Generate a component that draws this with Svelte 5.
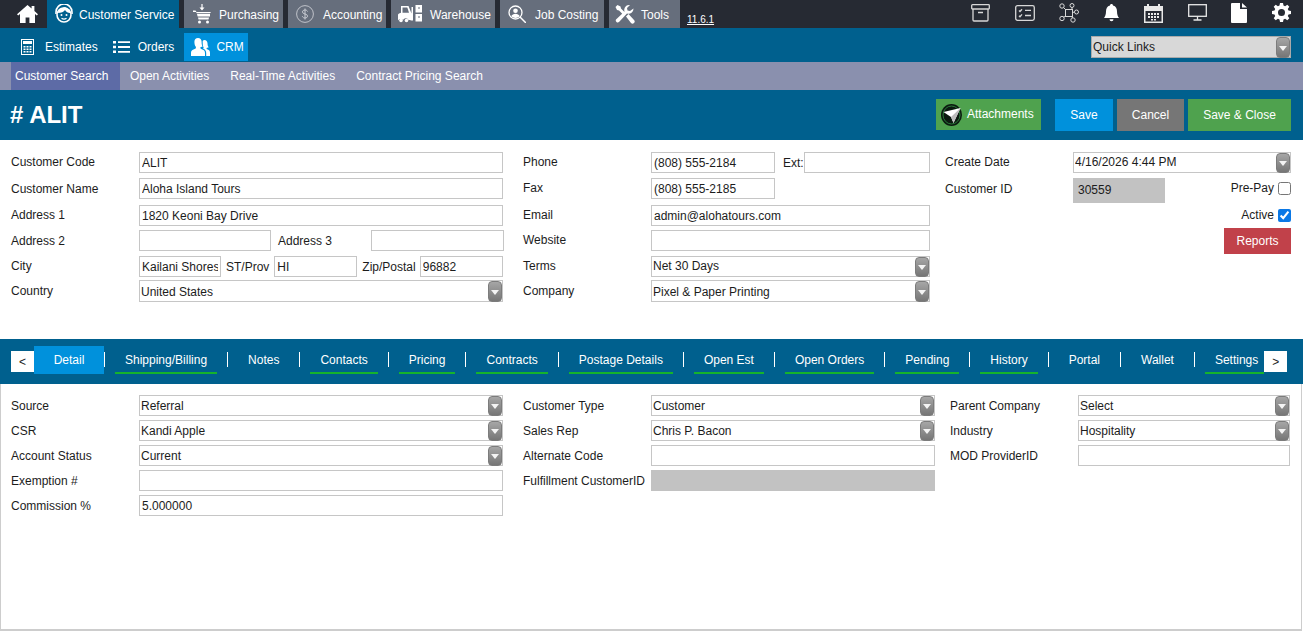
<script>
  const modules = [
    { id: "purchasing", label: "Purchasing" },
    { id: "accounting", label: "Accounting" },
    { id: "warehouse", label: "Warehouse" },
    { id: "costing", label: "Job Costing" },
    { id: "tools", label: "Tools" },
  ];
  const subLinks = ["Open Activities", "Real-Time Activities", "Contract Pricing Search"];
  const tabs = [
    { label: "Shipping/Billing", mark: true },
    { label: "Notes" },
    { label: "Contacts", mark: true },
    { label: "Pricing", mark: true },
    { label: "Contracts", mark: true },
    { label: "Postage Details", mark: true },
    { label: "Open Est", mark: true },
    { label: "Open Orders", mark: true },
    { label: "Pending", mark: true },
    { label: "History", mark: true },
    { label: "Portal" },
    { label: "Wallet" },
  ];
</script>

{#snippet pick(value, cls = "")}
  <div class="pick {cls}">
    <select><option>{value}</option></select>
    <span class="arrow"></span>
  </div>
{/snippet}

<div class="page">
  <nav class="topbar">
    <a class="home" href="#home" aria-label="Home">
      <svg width="21" height="18" viewBox="0 0 21 18"><path fill="#fff" d="M10.5 0 0 9.2l1.2 1.3L3 9v9h5.6v-5.6h3.8V18H18V9l1.8 1.5L21 9.2l-3.6-3.1V1h-2.8v2.6z"/></svg>
    </a>
    <a class="mod active" href="#cs">
      <svg width="20" height="20" viewBox="0 0 20 20" fill="none" stroke="#fff"><path stroke-width="1.6" d="M2 10V8a8 8 0 0 1 16 0v2"/><circle cx="10" cy="11" r="7" stroke-width="1.6"/><path fill="#fff" stroke="none" d="M4 9c3 0 6-1 7-3 1 2 3 3 5 3V6l-5-3-6 2z"/><circle cx="7.5" cy="11" r="1" fill="#fff" stroke="none"/><circle cx="12.5" cy="11" r="1" fill="#fff" stroke="none"/><path stroke-width="1.2" d="M7.5 14.2c1.5 1 3.5 1 5 0"/></svg>
      Customer Service
    </a>
    {#each modules as m}
      <a class="mod {m.id}" href="#{m.id}">
        {#if m.id === "purchasing"}
          <svg width="18" height="20" viewBox="0 0 18 20" fill="#fff"><path d="M8.400 0h1.200v3.500h1.900L9 6.500l-2.500-3h1.900zM0 6.500h2.500l1 1.500H18l-1 1.200H3.800L3 8H0zM4 10h13v2.500H4.600zM5 13.500h11l-.5 2H5.500z"/><circle cx="6.500" cy="18" r="1.500"/><circle cx="14.500" cy="18" r="1.500"/></svg>
        {:else if m.id === "accounting"}
          <svg width="18" height="18" viewBox="0 0 18 18" fill="none" stroke="#c9ccd3" stroke-width=".9"><circle cx="9" cy="9" r="8.400"/><path stroke-width="1" d="M11.500 6.500C11 5.300 10.200 5 9 5 7.500 5 6.500 5.700 6.500 7c0 2.700 5 1.300 5 4 0 1.300-1 2-2.500 2-1.300 0-2.200-.5-2.700-1.700M9 3.500v11"/></svg>
        {:else if m.id === "warehouse"}
          <svg width="24" height="18" viewBox="0 0 24 18" fill="#fff"><path fill-rule="evenodd" d="M1 8.500 3 7.800V1h7.500l3 7.500V2h1.500v13.500h-2.500V15h-2a3 3 0 0 0-5.500 0 3 3 0 0 0-5 .5V9.500zM4.500 2.500v5.300H11L9.300 2.500z"/><circle cx="3" cy="15.500" r="1.800"/><circle cx="8.500" cy="15.500" r="1.800"/><path d="M17.500 0H24v7.500h-6.500zM17.500 9H24v7.500h-6.500z"/><path fill="#666e7c" d="M20 2.500h2v1h-2zM20 11.500h2v1h-2z"/></svg>
        {:else if m.id === "costing"}
          <svg width="18" height="18" viewBox="0 0 18 18" fill="none" stroke="#fff"><circle cx="7.500" cy="7.500" r="6.500" stroke-width="1.300"/><path stroke-width="1.500" stroke-linecap="round" d="m12.500 12.500 5 5"/><circle cx="7.500" cy="5.800" r="2.300" fill="#fff" stroke="none"/><path fill="#fff" stroke="none" d="M3.200 11.300C4 9.500 5.600 8.700 7.500 8.700s3.500.8 4.300 2.600a6 6 0 0 1-8.600 0z"/></svg>
        {:else}
          <svg width="21" height="20" viewBox="0 0 20 20" fill="#fff"><path d="m1 3 2-2 3 1.500.5 2L11 9l-2 2-4.500-4.500-2-.5zM19 4.500a5 5 0 0 1-6.500 5L4.500 18a2 2 0 0 1-3-2.500l8.500-8a5 5 0 0 1 5.500-6.500l-3 3 .5 2.500 2.500.5z"/><path d="m11.500 12.500 2.500-2.500 5.500 6a2 2 0 0 1-3 3z"/></svg>
        {/if}
        {m.label}
      </a>
    {/each}
    <span class="version">11.6.1</span>
    <div class="tray">
      <svg width="19" height="18" viewBox="0 0 19 18" fill="none" stroke="#d8d8d8" stroke-width="1.300"><rect x=".7" y=".7" width="17.6" height="4.3" rx=".8"/><path d="M2 5v11a1 1 0 0 0 1 1h13a1 1 0 0 0 1-1V5M7 8.500h5"/></svg>
      <svg width="20" height="16" viewBox="0 0 20 16" fill="none" stroke="#d8d8d8" stroke-width="1.300"><rect x=".7" y=".7" width="18.6" height="14.6" rx="1.8"/><path d="M10 5.300h6M10 10.500h6M4 5.500l1 1 2-2.300M4 10.700l1 1 2-2.300"/></svg>
      <svg width="20" height="20" viewBox="0 0 20 20" fill="none" stroke="#d8d8d8"><rect x="6.500" y="6.500" width="7" height="7"/><circle cx="3" cy="3" r="2.200"/><circle cx="13" cy="2.500" r="2"/><circle cx="17.500" cy="9" r="2"/><circle cx="14" cy="17" r="2.200"/><circle cx="3" cy="15.500" r="2.200"/><path d="m4.500 4.500 2 2M13 4.500v2M13.500 9.500l2-.5M13 13.500l.5 1.500M6.500 13.500l-2 .5"/></svg>
      <svg width="15" height="18" viewBox="0 0 15 18" fill="#fff"><path d="M7.500 0C8.300 0 9 .6 9 1.400 12 2.200 13 4.500 13 7.500c0 3 .8 5 2 6.500H0c1.200-1.500 2-3.500 2-6.500C2 4.500 3 2.200 6 1.400 6 .6 6.700 0 7.500 0z"/><path d="M5.500 15.300h4a2 2 0 0 1-4 0z"/></svg>
      <svg width="19" height="20" viewBox="0 0 19 20"><path fill="#e8e8e8" d="M0 3h3V1h2v2h9V1h2v2h3v17H0zm1.500 5v10.500h16V8z"/><path fill="#e8e8e8" d="M4 10h2v2H4zM7 10h2v2H7zM10 10h2v2h-2zM13 10h2v2h-2zM4 13h2v2H4zM7 13h2v2H7zM10 13h2v2h-2zM13 13h2v2h-2zM7 16h2v1.500H7zM10 16h2v1.500h-2z"/></svg>
      <svg width="19" height="17" viewBox="0 0 19 17" fill="none" stroke="#e8e8e8" stroke-width="1.300"><rect x=".7" y=".7" width="17.6" height="11.600"/><path d="M9.500 12.500v3M5.500 16h8"/></svg>
      <svg width="16" height="20" viewBox="0 0 16 20" fill="#fff"><path d="M0 1a1 1 0 0 1 1-1h8v6h7v13a1 1 0 0 1-1 1H1a1 1 0 0 1-1-1zM11 0l5 4.500h-5z"/></svg>
      <svg width="19" height="19" viewBox="0 0 19 19" fill="#fff"><path fill-rule="evenodd" d="M8 0h3l.5 2.600 1.600.7L15.300 1.800l2 2-1.500 2.200.7 1.600 2.500.5v2.900l-2.500.5-.7 1.600 1.500 2.200-2 2-2.200-1.500-1.600.7L11 19H8l-.5-2.500-1.600-.7-2.200 1.500-2-2 1.500-2.200-.7-1.600L0 10.900V8l2.500-.5.7-1.600L1.700 3.800l2-2 2.200 1.500 1.600-.7zm1.500 6a3.500 3.500 0 1 0 0 7 3.500 3.500 0 0 0 0-7z"/></svg>
    </div>
  </nav>

  <nav class="secondbar">
    <a href="#estimates">
      <svg width="13" height="16" viewBox="0 0 13 16"><path fill="#fff" fill-rule="evenodd" d="M0 0h13v16H0zm1 1v14h11V1zm1 1h9v3H2zM2.500 7h2v1.500h-2zm3 0h2v1.500h-2zm3 0h2v1.500h-2zm-6 2.500h2V11h-2zm3 0h2V11h-2zm3 0h2V11h-2zm-6 2.500h2v1.500h-2zm3 0h2v1.500h-2zm3 0h2v1.500h-2z"/></svg>
      Estimates
    </a>
    <a href="#orders">
      <svg width="17" height="12" viewBox="0 0 17 12" fill="#fff"><path d="M0 0h3v2.400H0zM5 .3h12v1.800H5zM0 4.800h3v2.400H0zM5 5.100h12v1.800H5zM0 9.600h3V12H0zM5 9.900h12v1.800H5z"/></svg>
      Orders
    </a>
    <a class="active" href="#crm">
      <svg width="19" height="18" viewBox="0 0 19 18" fill="#fff"><path d="M7 0c2.200 0 3.600 1.600 3.600 3.800 0 2 .2 3.400 1 4.600l-2.300.8.400 1.500L12.500 12c.8.500 1.500 1.300 1.500 3.300V18H0v-3c0-1.800.7-2.600 2-3.200l2.700-1.300.3-1.500C3.800 8 3.400 5.800 3.400 3.800 3.400 1.600 4.800 0 7 0z"/><path d="M13.500 2c1.700 0 3 1.400 3 3.300 0 1.500.3 3 1.300 4l-2.300.8.200 1 2 1c.9.500 1.300 1.300 1.300 3V18h-3.800v-2.700c0-2-.8-3.300-2.200-4.200l-1-.6.700-.7c-.8-1.500-1-3.200-1-5 0-.8-.1-1.400 0-1.900.4-.5 1-.9 1.800-.9z"/></svg>
      CRM
    </a>
    <div class="quick">{@render pick("Quick Links")}</div>
  </nav>

  <nav class="thirdbar">
    <a class="active" href="#search">Customer Search</a>
    {#each subLinks as link}
      <a href="#link">{link}</a>
    {/each}
  </nav>

  <header class="title">
    <h1># ALIT</h1>
    <button class="btn attach">
      <svg width="21" height="22" viewBox="0 0 21 22"><ellipse cx="10.5" cy="11" rx="10.5" ry="11" fill="#0c1a10"/><ellipse cx="10.5" cy="11" rx="8.5" ry="9" fill="none" stroke="#2a7a3a"/><path fill="#fff" d="M2.500 8 19.500 4 12.500 19l-2.500-6z"/><path fill="#bdbdbd" d="m10 13 9.500-9-7 15z"/></svg>
      Attachments
    </button>
    <button class="btn save">Save</button>
    <button class="btn cancel">Cancel</button>
    <button class="btn close">Save &amp; Close</button>
  </header>

  <section class="upper">
    <div class="col left">
      <label for="code">Customer Code</label><input id="code" value="ALIT" />
      <label for="name">Customer Name</label><input id="name" value="Aloha Island Tours" />
      <label for="a1">Address 1</label><input id="a1" value="1820 Keoni Bay Drive" />
      <label for="a2">Address 2</label>
      <div class="pair">
        <input id="a2" class="a2" />
        <label for="a3">Address 3</label>
        <input id="a3" class="a3" />
      </div>
      <label for="city">City</label>
      <div class="pair">
        <input id="city" class="city" value="Kailani Shores" />
        <label for="st">ST/Prov</label>
        <input id="st" class="st" value="HI" />
        <label for="zip">Zip/Postal</label>
        <input id="zip" class="zip" value="96882" />
      </div>
      <span class="lab tall">Country</span>{@render pick("United States", "tall")}
    </div>

    <div class="col mid">
      <label for="phone">Phone</label>
      <div class="pair">
        <input id="phone" class="phone" value="(808) 555-2184" />
        <label for="ext">Ext:</label>
        <input id="ext" class="ext" />
      </div>
      <label for="fax">Fax</label><input id="fax" class="phone" value="(808) 555-2185" />
      <label for="email">Email</label><input id="email" value="admin@alohatours.com" />
      <label for="web">Website</label><input id="web" />
      <span class="lab">Terms</span>{@render pick("Net 30 Days")}
      <span class="lab tall">Company</span>{@render pick("Pixel & Paper Printing", "tall")}
    </div>

    <div class="col right">
      <span class="lab">Create Date</span>{@render pick("4/16/2026 4:44 PM")}
      <span class="lab tall">Customer ID</span>
      <div class="pair idrow">
        <span class="readonly id">30559</span>
        <label class="check">Pre-Pay <input type="checkbox" /></label>
      </div>
      <div class="flags">
        <label class="check">Active <input type="checkbox" checked /></label>
        <button class="btn reports">Reports</button>
      </div>
    </div>
  </section>

  <nav class="tabs">
    <button class="step">&lt;</button>
    <a class="tab current" href="#detail">Detail</a>
    <i class="sep first"></i>
    {#each tabs as t}
      <a class="tab" class:mark={t.mark} href="#tab">{t.label}</a>
      <i class="sep"></i>
    {/each}
    <a class="tab mark last" href="#settings">Settings</a>
    <button class="step">&gt;</button>
  </nav>

  <section class="lower">
    <div class="col left">
      <span class="lab">Source</span>{@render pick("Referral")}
      <span class="lab">CSR</span>{@render pick("Kandi Apple")}
      <span class="lab">Account Status</span>{@render pick("Current")}
      <label for="ex">Exemption #</label><input id="ex" />
      <label for="com">Commission %</label><input id="com" value="5.000000" />
    </div>
    <div class="col mid">
      <span class="lab">Customer Type</span>{@render pick("Customer")}
      <span class="lab">Sales Rep</span>{@render pick("Chris P. Bacon")}
      <label for="alt">Alternate Code</label><input id="alt" />
      <span class="lab">Fulfillment CustomerID</span><span class="readonly"></span>
    </div>
    <div class="col right">
      <span class="lab">Parent Company</span>{@render pick("Select")}
      <span class="lab">Industry</span>{@render pick("Hospitality")}
      <label for="mod">MOD ProviderID</label><input id="mod" />
    </div>
  </section>
</div>

<style>
  :global(body) {
    margin: 0;
    background: #fff;
  }
  .page {
    width: 1303px;
    height: 632px;
    overflow: hidden;
    font: 12px "Liberation Sans", Arial, sans-serif;
    color: #1c1c1c;
  }
  a {
    color: #fff;
    text-decoration: none;
  }
  nav a,
  header h1,
  label {
    white-space: nowrap;
  }

  .topbar {
    display: flex;
    height: 28px;
    background: #262a33;
  }
  .home {
    width: 47px;
    display: flex;
    align-items: center;
    justify-content: flex-end;
    padding-right: 9px;
    box-sizing: border-box;
  }
  .mod {
    display: flex;
    align-items: center;
    box-sizing: border-box;
    margin-right: 5px;
    padding-top: 1px;
    background: #666e7c;
  }
  .mod svg {
    margin-top: -1px;
  }
  .mod.active { background: #00608e; width: 132px; padding-left: 7px; gap: 5px; }
  .mod.purchasing { width: 99px; padding-left: 9px; gap: 8px; }
  .mod.accounting { width: 98px; padding-left: 8px; gap: 9px; }
  .mod.warehouse { width: 104px; padding-left: 7px; gap: 8px; }
  .mod.costing { width: 104px; padding-left: 8px; gap: 9px; }
  .mod.tools { width: 71px; padding-left: 5px; gap: 6px; }
  .version {
    margin: 14px 0 0 2px;
    font-size: 10px;
    color: #fff;
    text-decoration: underline;
  }
  .tray {
    margin-left: auto;
    display: flex;
    align-items: center;
    width: 332px;
    padding: 0 12px 3px 0;
    box-sizing: border-box;
    justify-content: space-between;
  }

  .secondbar {
    display: flex;
    height: 34px;
    background: #00608e;
    padding: 5px 0 1px 21px;
    box-sizing: border-box;
  }
  .secondbar a {
    display: flex;
    align-items: center;
    gap: 11px;
    margin-right: 15px;
  }
  .secondbar a:nth-child(2) {
    gap: 8px;
    margin-right: 10px;
  }
  .secondbar a.active {
    box-sizing: border-box;
    background: #0091dc;
    padding: 0 0 0 7px;
    gap: 6px;
    width: 64px;
    margin-right: 0;
  }
  .quick {
    margin-left: auto;
    margin-right: 12px;
    width: 200px;
    height: 22px;
    margin-top: 3px;
  }
  .quick .pick {
    height: 22px;
  }
  .quick :global(select) {
    background: #d8d8d8;
    border-color: #aaa;
  }

  .thirdbar {
    display: flex;
    height: 28px;
    background: #8a90ae;
    padding-left: 11px;
  }
  .thirdbar a {
    display: flex;
    align-items: center;
    padding: 0 10.5px;
  }
  .thirdbar a:nth-child(2) {
    padding-left: 9.5px;
  }
  .thirdbar a.active {
    padding: 0 12px 0 4px;
    background: #5d6ba6;
  }

  .title {
    display: flex;
    align-items: center;
    height: 50px;
    background: #00608e;
    padding: 0 12px 0 10px;
    box-sizing: border-box;
  }
  h1 {
    margin: 0 auto 0 0;
    font-size: 24px;
    font-weight: 700;
    color: #fff;
  }
  .btn {
    border: 0;
    padding: 0;
    font: inherit;
    color: #fff;
    height: 32px;
  }
  .attach {
    width: 105px;
    height: 31px;
    margin: 0 14px 1px 0;
    background: #4fa24e;
    display: flex;
    align-items: center;
    gap: 5px;
    padding: 0 0 2px 5px;
  }
  .attach svg {
    margin-top: 2px;
  }
  .save { width: 58px; margin-right: 4px; background: #0091dc; }
  .cancel { width: 67px; margin-right: 4px; background: #767676; }
  .close { width: 103px; background: #4fa24e; }

  .upper {
    height: 199px;
    padding-top: 12px;
    box-sizing: border-box;
    display: flex;
  }
  .col {
    display: grid;
    align-items: center;
    align-content: start;
    box-sizing: border-box;
  }
  .upper .col {
    grid-template-rows: 26px 27px 25px 26px 24px 22px;
    align-items: start;
  }
  .upper .col > label,
  .upper .col > .lab {
    line-height: 20px;
  }
  .upper .col > .tall,
  .upper .col > label[for="name"] {
    line-height: 22px;
  }
  .upper .col > label[for="a2"] {
    line-height: 22px;
  }
  .upper .col > input,
  .upper .pair,
  .upper .pick {
    height: 21px;
  }
  .upper .pick.tall {
    height: 22px;
  }
  .upper select {
    padding-bottom: 2px;
  }
  .col.left {
    grid-template-columns: 128px 364px;
    margin-left: 11px;
    width: 512px;
  }
  .upper .col.mid {
    grid-template-columns: 128px 279px;
    width: 422px;
  }
  .upper .col.right {
    grid-template-columns: 128px 218px;
    grid-template-rows: 26px 27px 56px;
  }
  input:not([type="checkbox"]),
  select {
    box-sizing: border-box;
    width: 100%;
    height: 100%;
    min-width: 0;
    margin: 0;
    padding: 0 2px;
    border: 1px solid #c6c6c6;
    border-radius: 0;
    background: #fff;
    color: #1c1c1c;
    font: inherit;
    outline: none;
  }
  .pick {
    position: relative;
    height: 100%;
  }
  select {
    appearance: none;
    padding-left: 1px;
  }
  .arrow {
    position: absolute;
    right: 1px;
    top: 1px;
    bottom: 0;
    width: 14px;
    border-radius: 4px;
    border: 1px solid #7c7c7c;
    box-sizing: border-box;
    background: linear-gradient(#a6a6a6, #767676);
  }
  .arrow::after {
    content: "";
    position: absolute;
    left: 2px;
    top: 50%;
    margin-top: -2px;
    border: 4px solid transparent;
    border-top: 5px solid #f4f4f4;
    border-bottom: 0;
  }
  .col > input,
  .pair {
    height: 100%;
  }
  .pair {
    display: flex;
    align-items: center;
    min-width: 0;
  }
  .a2 { flex: 0 0 132px; margin-right: 7px !important; }
  .a3 { flex: 0 0 133px; margin-left: 39px !important; }
  .city { flex: 0 0 82px; }
  .st { flex: 0 0 83px; }
  .zip { flex: 0 0 83px; }
  .pair label[for="st"] { margin: 0 5px; }
  .pair label[for="zip"] { margin: 0 4px 0 5px; }
  .phone { flex: 0 0 124px; width: 124px !important; }
  .ext { flex: 0 0 126px; }
  .pair label[for="ext"] { flex: 0 0 29px; padding-left: 8px; box-sizing: border-box; }

  .readonly {
    display: block;
    box-sizing: border-box;
    height: 100%;
    background: #c2c2c2;
  }
  .id {
    flex: 0 0 92px;
    height: 25px;
    padding: 5px 5px 0;
  }
  .upper .idrow {
    height: 25px;
    justify-content: space-between;
    align-items: flex-start;
  }
  .idrow .check {
    margin-top: 3px;
  }
  .check {
    display: flex;
    align-items: center;
    justify-content: flex-end;
    gap: 4px;
  }
  .check input {
    width: 13px;
    height: 13px;
    margin: 0;
    accent-color: #0a78e6;
  }
  .flags {
    grid-column: 2;
    align-self: start;
    display: flex;
    flex-direction: column;
    align-items: flex-end;
    padding-top: 3px;
  }
  .reports {
    width: 67px;
    height: 26px;
    margin-top: 6px;
    background: #c1414a;
  }

  .tabs {
    display: flex;
    align-items: flex-start;
    height: 45px;
    background: #00608e;
    padding-left: 11px;
    box-sizing: border-box;
  }
  .step {
    flex: none;
    width: 23px;
    height: 21px;
    margin-top: 12px;
    padding: 0;
    border: 0;
    background: #fff;
    color: #1c1c1c;
    font: inherit;
  }
  .tab {
    flex: none;
    display: block;
    height: 28px;
    line-height: 28px;
    padding: 0 10px;
    box-sizing: border-box;
    margin-top: 7px;
    border-bottom: 2px solid transparent;
  }
  .tab.mark {
    border-bottom-color: #16b32c;
  }
  .tab.current {
    width: 70px;
    text-align: center;
    background: #0091dc;
    border-bottom: 0;
  }
  .sep {
    flex: none;
    width: 1px;
    height: 15px;
    margin: 13px 10px 0;
    background: #fff;
  }
  .sep.first {
    margin-left: 0;
  }
  .tab.last {
    padding-right: 6px;
  }

  .lower {
    display: flex;
    height: 247px;
    padding-top: 11px;
    box-sizing: border-box;
    border: 1px solid #cdcdcd;
    border-top: 0;
    border-bottom-width: 2px;
    margin-right: 1px;
  }
  .lower .col {
    grid-auto-rows: 21px;
    row-gap: 4px;
  }
  .lower .col.left {
    margin-left: 10px;
  }
  .lower .col.mid {
    grid-template-columns: 128px 284px;
    width: 427px;
  }
  .lower .col.right {
    grid-template-columns: 128px 212px;
  }
</style>
